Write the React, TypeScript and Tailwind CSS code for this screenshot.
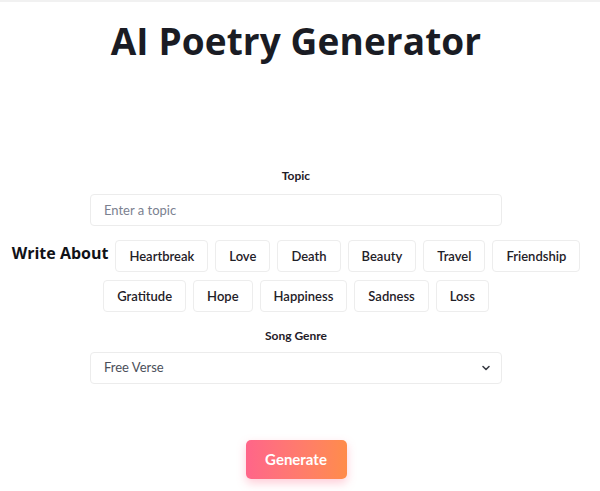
import React, { useState } from 'react';

const topics = [
  'Heartbreak',
  'Love',
  'Death',
  'Beauty',
  'Travel',
  'Friendship',
  'Gratitude',
  'Hope',
  'Happiness',
  'Sadness',
  'Loss',
];

const genres = ['Free Verse', 'Sonnet', 'Haiku', 'Limerick', 'Ballad'];

const App: React.FC = () => {
  const [topic, setTopic] = useState('');
  const [genre, setGenre] = useState('Free Verse');

  return (
    <div className="min-h-screen bg-white border-t-2 border-[#f1f1f1] font-['Lato',sans-serif]">
      <div className="w-[592px] flex flex-col items-center">
        <h1 className="mt-[12px] font-['Open_Sans',sans-serif] text-[37px] leading-[54px] font-bold text-[#1a1c24] tracking-[0.1px]">
          AI Poetry Generator
        </h1>

        <label className="mt-[100px] text-[12px] leading-[16px] font-bold text-[#1f2028]">Topic</label>
        <input
          type="text"
          value={topic}
          onChange={(e) => setTopic(e.target.value)}
          placeholder="Enter a topic"
          className="mt-[10px] w-[412px] h-[32px] px-[13px] text-[13px] text-[#374151] placeholder:text-[#7b8190] border border-[#ececec] rounded-[4px] outline-none"
        />

        <div className="mt-[14px] flex flex-wrap justify-center items-center gap-x-[7px] gap-y-[8px] px-[6px]">
          <span className="font-['Open_Sans',sans-serif] text-[16px] leading-[24px] font-bold text-[#111217] -mt-[6px]">
            Write About
          </span>
          {topics.map((t) => (
            <button
              key={t}
              type="button"
              onClick={() => setTopic(t)}
              className="h-[32px] px-[13px] pt-[1px] text-[13px] font-semibold text-[#1f2128] bg-white border border-[#ededed] rounded-[4px]"
            >
              {t}
            </button>
          ))}
        </div>

        <label className="mt-[16px] text-[12px] leading-[16px] font-bold text-[#1f2028]">Song Genre</label>
        <div className="mt-[8px] relative w-[412px]">
          <select
            value={genre}
            onChange={(e) => setGenre(e.target.value)}
            className="w-full h-[32px] px-[13px] appearance-none text-[13px] text-[#4b4f5a] bg-white border border-[#ececec] rounded-[4px] outline-none"
          >
            {genres.map((g) => (
              <option key={g} value={g}>
                {g}
              </option>
            ))}
          </select>
          <svg
            className="absolute right-[11px] top-[11px] w-[10px] h-[10px] pointer-events-none"
            viewBox="0 0 10 10"
            fill="none"
            stroke="#3a3d45"
            strokeWidth="1.6"
            strokeLinecap="round"
            strokeLinejoin="round"
          >
            <path d="M2 3.5 5 6.5 8 3.5" />
          </svg>
        </div>

        <button
          type="button"
          className="mt-[56px] w-[101px] h-[39px] rounded-[5px] bg-gradient-to-r from-[#ff6589] to-[#ff8c4a] text-white text-[15px] font-bold shadow-[0_4px_10px_rgba(255,110,140,0.35)]"
        >
          Generate
        </button>
      </div>
    </div>
  );
};

export default App;
